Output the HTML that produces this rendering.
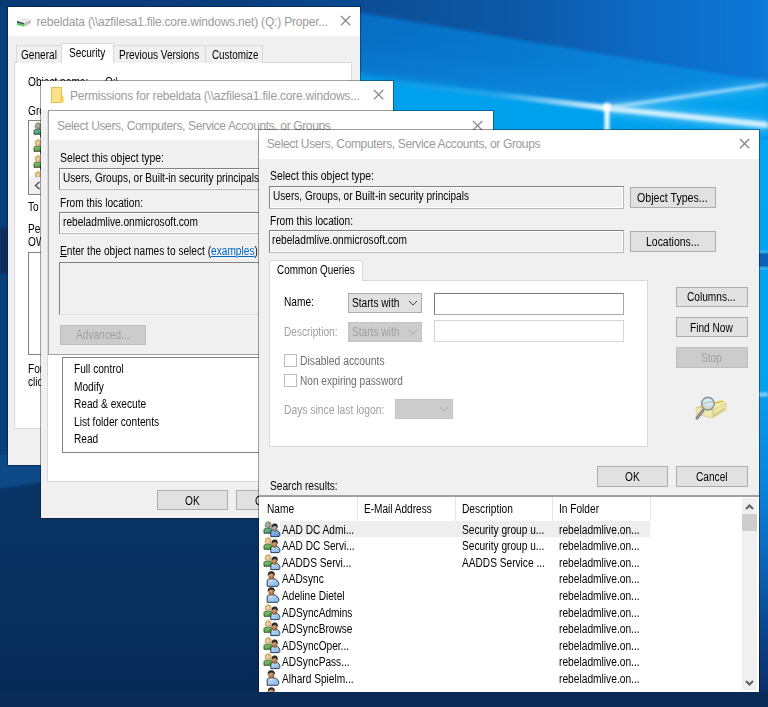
<!DOCTYPE html><html><head><meta charset="utf-8"><style>html,body{margin:0;padding:0;width:768px;height:707px;overflow:hidden;position:relative;font-family:"Liberation Sans",sans-serif}</style></head><body>
<svg width="768" height="707" style="position:absolute;left:0;top:0">
<defs>
<linearGradient id="gbase" x1="0" y1="0" x2="0" y2="1">
<stop offset="0" stop-color="#0a3f7c"/><stop offset="0.66" stop-color="#0b3e78"/><stop offset="1" stop-color="#082a58"/>
</linearGradient>
<linearGradient id="gright" x1="0" y1="0" x2="0" y2="707" gradientUnits="userSpaceOnUse">
<stop offset="0.18" stop-color="#05a6f2"/><stop offset="0.55" stop-color="#04a2ee"/><stop offset="0.57" stop-color="#0898ea"/><stop offset="0.68" stop-color="#0a86de"/><stop offset="0.80" stop-color="#0a64b8"/><stop offset="0.91" stop-color="#0b3f84"/><stop offset="1" stop-color="#0a2a5e"/>
</linearGradient>
<linearGradient id="gtop" x1="330" y1="0" x2="768" y2="0" gradientUnits="userSpaceOnUse">
<stop offset="0" stop-color="#0a4a90"/><stop offset="0.43" stop-color="#0a58a6"/><stop offset="0.71" stop-color="#0a6ac4"/><stop offset="1" stop-color="#0a78d8"/>
</linearGradient>
<linearGradient id="gtopstrip" x1="0" y1="0" x2="768" y2="0" gradientUnits="userSpaceOnUse">
<stop offset="0" stop-color="#0a3a76"/><stop offset="0.3" stop-color="#0a3d7c"/><stop offset="0.47" stop-color="#0a4a90"/><stop offset="1" stop-color="#0a4a90"/>
</linearGradient>
<linearGradient id="gmid" x1="330" y1="40" x2="768" y2="120" gradientUnits="userSpaceOnUse">
<stop offset="0" stop-color="#0a72c8"/><stop offset="1" stop-color="#0a94ea"/>
</linearGradient>
<linearGradient id="gvert" x1="0" y1="0" x2="0" y2="1">
<stop offset="0" stop-color="#ffffff"/><stop offset="1" stop-color="#d8f4ff"/>
</linearGradient>
<linearGradient id="gbl" x1="0" y1="465" x2="0" y2="707" gradientUnits="userSpaceOnUse">
<stop offset="0" stop-color="#083466"/><stop offset="0.3" stop-color="#083262"/><stop offset="1" stop-color="#072a56"/>
</linearGradient>
<linearGradient id="gbeamL" x1="360" y1="0" x2="607" y2="0" gradientUnits="userSpaceOnUse"><stop offset="0" stop-color="#d8f2ff" stop-opacity="0"/><stop offset="0.55" stop-color="#d8f2ff" stop-opacity="0.15"/><stop offset="1" stop-color="#f0faff" stop-opacity="0.95"/></linearGradient>
<linearGradient id="gmid2" x1="0" y1="0" x2="0" y2="1"><stop offset="0" stop-color="#0a62b4" stop-opacity="0.4"/><stop offset="1" stop-color="#0a62b4" stop-opacity="0"/></linearGradient>
<filter id="b1" x="-20%" y="-50%" width="140%" height="200%"><feGaussianBlur stdDeviation="1.5"/></filter>
<filter id="b2" x="-20%" y="-50%" width="140%" height="200%"><feGaussianBlur stdDeviation="5"/></filter>
<filter id="b3" x="-50%" y="-50%" width="200%" height="200%"><feGaussianBlur stdDeviation="0.8"/></filter>
</defs>
<rect width="768" height="707" fill="url(#gbase)"/>
<rect x="0" y="0" width="8" height="707" fill="#0a3f7c"/>
<rect x="0" y="228" width="8" height="46" fill="#072c58" filter="url(#b1)"/>
<polygon points="300,0 768,0 768,707 259,707 259,0" fill="url(#gright)"/>
<polygon points="330,0 768,0 768,140 330,140" fill="url(#gmid)"/>
<polygon points="300,-10 790,-10 790,86 768,82 330,8 300,3" fill="url(#gtop)" filter="url(#b1)"/>
<polygon points="330,8 768,81 768,110 330,45" fill="url(#gmid2)" filter="url(#b2)"/>
<polygon points="330,71 607,107 768,84 768,140 330,140" fill="#06a2ee" filter="url(#b2)"/>
<polygon points="360,76 607,105 607,111 360,81" fill="url(#gbeamL)" filter="url(#b1)"/>
<polygon points="607,104 768,120 768,130 607,112" fill="#bfeaff" opacity="0.5" filter="url(#b2)"/>
<polygon points="607,105.5 768,122 768,128 607,111" fill="#e8f8ff" opacity="0.85" filter="url(#b1)"/>
<polygon points="607,105 768,82 768,88 607,111" fill="#bfe9ff" opacity="0.35" filter="url(#b2)"/>
<polygon points="607,106 768,83 768,86 607,110" fill="#bfe9ff" opacity="0.75" filter="url(#b1)"/>
<rect x="604" y="106" width="6" height="30" fill="#c8f0ff" opacity="0.6" filter="url(#b1)"/>
<rect x="605.3" y="106" width="3.4" height="30" fill="url(#gvert)" filter="url(#b3)"/>
<circle cx="607" cy="107" r="4" fill="#fff" filter="url(#b1)"/>
<rect x="0" y="0" width="362" height="7" fill="url(#gtopstrip)"/>
<rect x="759" y="252" width="9" height="16" fill="#0b62b8"/>
<rect x="759" y="251" width="9" height="2" fill="#56c4f5" filter="url(#b3)"/>
<rect x="759" y="267" width="9" height="2" fill="#56c4f5" filter="url(#b3)"/>
<rect x="755" y="393" width="13" height="3" fill="#a8e4ff" filter="url(#b1)"/>
<polygon points="0,465 40,465 40,517 258,517 258,707 0,707" fill="url(#gbl)"/>
<polygon points="-10,455 60,455 60,480 -10,490" fill="#0b4886" filter="url(#b1)"/>
<rect x="0" y="692" width="768" height="15" fill="#0a2a58"/>
</svg><svg width="0" height="0" style="position:absolute"><defs>
<linearGradient id="shirtB" x1="0" y1="0" x2="1" y2="1"><stop offset="0" stop-color="#c4e0fa"/><stop offset="1" stop-color="#7fb2e6"/></linearGradient>
<linearGradient id="shirtG" x1="0" y1="0" x2="1" y2="1"><stop offset="0" stop-color="#8fd070"/><stop offset="1" stop-color="#3f8f30"/></linearGradient>
<radialGradient id="faceD" cx="0.4" cy="0.35" r="0.7"><stop offset="0" stop-color="#e2a878"/><stop offset="1" stop-color="#8a5428"/></radialGradient>
<radialGradient id="faceL" cx="0.4" cy="0.35" r="0.7"><stop offset="0" stop-color="#f8e0c0"/><stop offset="1" stop-color="#c09060"/></radialGradient>
<linearGradient id="shirtBs" x1="0" y1="0" x2="1" y2="1"><stop offset="0" stop-color="#9cc8f0"/><stop offset="1" stop-color="#4e8ed0"/></linearGradient>
<linearGradient id="shirtGs" x1="0" y1="0" x2="1" y2="1"><stop offset="0" stop-color="#7cc8a0"/><stop offset="1" stop-color="#2f7f60"/></linearGradient>
<radialGradient id="faceS" cx="0.4" cy="0.35" r="0.7"><stop offset="0" stop-color="#c8c0b0"/><stop offset="1" stop-color="#706858"/></radialGradient>
</defs></svg>
<div style="position:absolute;left:0;top:0;width:768px;height:707px;clip-path:inset(6px 407px 241px 7px)">
<div style="position:absolute;left:7px;top:6px;width:354px;height:460px;background:#f0f0f0;background-clip:padding-box;border:1px solid rgba(0,0,0,0.33);box-sizing:border-box"></div>
<div style="position:absolute;left:8px;top:7px;width:352px;height:29px;background:#fff"></div>
<svg style="position:absolute;left:16px;top:16px" width="16" height="13" viewBox="0 0 16 13">
<path d="M1 5 L9 1.5 L15 4 L15 7 L8 10.5 L1 9Z" fill="#d4d4d4"/>
<path d="M1 5 L9 1.5 L15 4 L8 7.2 Z" fill="#ececec"/>
<path d="M8 7.2 L15 4 L15 7 L8 10.5Z" fill="#c0c0c0"/>
<path d="M1 5 L8 7.2 L8 8.6 L1 6.8Z" fill="#3a3a3a"/>
<path d="M1 6.8 L8 8.6 L8 10.5 L1 9Z" fill="#4ccc5a"/>
<path d="M9 10.3 L11 10.3 L10 11.8Z" fill="#d8d8d8"/>
</svg>
<svg style="position:absolute;left:339.79999999999995px;top:14.9px" width="11.2" height="11.2"><path d="M1 1 L10.2 10.2 M10.2 1 L1 10.2" stroke="#8c8c8c" stroke-width="1.3"/></svg>
<div style="position:absolute;left:14px;top:62px;width:338px;height:367px;background:#fff;border:1px solid #d9d9d9;box-sizing:border-box"></div>
<div style="position:absolute;left:16px;top:45px;width:46px;height:18px;background:#f0f0f0;border:1px solid #d9d9d9;border-bottom:none;box-sizing:border-box"></div>
<div style="position:absolute;left:114px;top:45px;width:92px;height:18px;background:#f0f0f0;border:1px solid #d9d9d9;border-bottom:none;border-left:none;box-sizing:border-box"></div>
<div style="position:absolute;left:206px;top:45px;width:57px;height:18px;background:#f0f0f0;border:1px solid #d9d9d9;border-bottom:none;border-left:none;box-sizing:border-box"></div>
<div style="position:absolute;left:61px;top:43px;width:53px;height:20px;background:#fff;border:1px solid #d9d9d9;border-bottom:none;box-sizing:border-box"></div>
<div style="position:absolute;left:28px;top:120px;width:312px;height:75px;background:#fff;border:1px solid #828282;box-sizing:border-box"></div>
<svg style="position:absolute;left:33px;top:122px" width="18" height="17" viewBox="0 0 18 17">
<path d="M1 12.3 L1 8.6 C1.3 7.6 2.6 7.2 4.5 7.2 L6.5 7.2 C8.2 7.3 9.2 8 9.4 9.5 L9.4 12.3 Z" fill="url(#shirtGs)" stroke="#1e3a22" stroke-width="0.8" stroke-linejoin="round"/>
<path d="M1.8 6 C1.4 1.5 3.2 0.2 5.3 0.2 C7.5 0.2 9 1.5 8.8 6.5 L7.6 7 L7.6 3.2 C6.8 2.5 4 2.5 3.2 3.2 L3.2 7 Z" fill="#8aa880"/>
<ellipse cx="5.4" cy="4.6" rx="2.3" ry="3" fill="url(#faceS)"/>
<path d="M7.8 15.6 L7.8 10.8 C8.2 9.6 9.6 9.1 11.4 9.1 L13 9.1 C14.8 9.4 16.2 10.6 16.7 12.3 C17.1 13.6 16.9 15 16 15.6 Z" fill="url(#shirtBs)" stroke="#1e2a36" stroke-width="0.9" stroke-linejoin="round"/>
<ellipse cx="11.6" cy="7.4" rx="2.5" ry="3.3" fill="url(#faceS)"/>
<path d="M8.7 7.6 C8.3 3.6 9.8 2.4 11.7 2.4 C13.7 2.4 15.2 3.6 14.9 7.8 C14.5 6.2 13.6 5 11.8 4.9 C10.2 4.9 9.3 5.8 8.7 7.6Z" fill="#1e3040"/>
</svg>
<svg style="position:absolute;left:33px;top:139px" width="18" height="17" viewBox="0 0 18 17">
<path d="M1 12.3 L1 8.6 C1.3 7.6 2.6 7.2 4.5 7.2 L6.5 7.2 C8.2 7.3 9.2 8 9.4 9.5 L9.4 12.3 Z" fill="url(#shirtG)" stroke="#1e3a22" stroke-width="0.8" stroke-linejoin="round"/>
<path d="M1.8 6 C1.4 1.5 3.2 0.2 5.3 0.2 C7.5 0.2 9 1.5 8.8 6.5 L7.6 7 L7.6 3.2 C6.8 2.5 4 2.5 3.2 3.2 L3.2 7 Z" fill="#cdb66a"/>
<ellipse cx="5.4" cy="4.6" rx="2.3" ry="3" fill="url(#faceL)"/>
<path d="M7.8 15.6 L7.8 10.8 C8.2 9.6 9.6 9.1 11.4 9.1 L13 9.1 C14.8 9.4 16.2 10.6 16.7 12.3 C17.1 13.6 16.9 15 16 15.6 Z" fill="url(#shirtB)" stroke="#1e2a36" stroke-width="0.9" stroke-linejoin="round"/>
<ellipse cx="11.6" cy="7.4" rx="2.5" ry="3.3" fill="url(#faceD)"/>
<path d="M8.7 7.6 C8.3 3.6 9.8 2.4 11.7 2.4 C13.7 2.4 15.2 3.6 14.9 7.8 C14.5 6.2 13.6 5 11.8 4.9 C10.2 4.9 9.3 5.8 8.7 7.6Z" fill="#2a2a2a"/>
</svg>
<svg style="position:absolute;left:33px;top:155px" width="18" height="17" viewBox="0 0 18 17">
<path d="M1 12.3 L1 8.6 C1.3 7.6 2.6 7.2 4.5 7.2 L6.5 7.2 C8.2 7.3 9.2 8 9.4 9.5 L9.4 12.3 Z" fill="url(#shirtG)" stroke="#1e3a22" stroke-width="0.8" stroke-linejoin="round"/>
<path d="M1.8 6 C1.4 1.5 3.2 0.2 5.3 0.2 C7.5 0.2 9 1.5 8.8 6.5 L7.6 7 L7.6 3.2 C6.8 2.5 4 2.5 3.2 3.2 L3.2 7 Z" fill="#cdb66a"/>
<ellipse cx="5.4" cy="4.6" rx="2.3" ry="3" fill="url(#faceL)"/>
<path d="M7.8 15.6 L7.8 10.8 C8.2 9.6 9.6 9.1 11.4 9.1 L13 9.1 C14.8 9.4 16.2 10.6 16.7 12.3 C17.1 13.6 16.9 15 16 15.6 Z" fill="url(#shirtB)" stroke="#1e2a36" stroke-width="0.9" stroke-linejoin="round"/>
<ellipse cx="11.6" cy="7.4" rx="2.5" ry="3.3" fill="url(#faceD)"/>
<path d="M8.7 7.6 C8.3 3.6 9.8 2.4 11.7 2.4 C13.7 2.4 15.2 3.6 14.9 7.8 C14.5 6.2 13.6 5 11.8 4.9 C10.2 4.9 9.3 5.8 8.7 7.6Z" fill="#2a2a2a"/>
</svg>
<svg style="position:absolute;left:33px;top:171px" width="18" height="17" viewBox="0 0 18 17">
<path d="M1 12.3 L1 8.6 C1.3 7.6 2.6 7.2 4.5 7.2 L6.5 7.2 C8.2 7.3 9.2 8 9.4 9.5 L9.4 12.3 Z" fill="url(#shirtG)" stroke="#1e3a22" stroke-width="0.8" stroke-linejoin="round"/>
<path d="M1.8 6 C1.4 1.5 3.2 0.2 5.3 0.2 C7.5 0.2 9 1.5 8.8 6.5 L7.6 7 L7.6 3.2 C6.8 2.5 4 2.5 3.2 3.2 L3.2 7 Z" fill="#cdb66a"/>
<ellipse cx="5.4" cy="4.6" rx="2.3" ry="3" fill="url(#faceL)"/>
<path d="M7.8 15.6 L7.8 10.8 C8.2 9.6 9.6 9.1 11.4 9.1 L13 9.1 C14.8 9.4 16.2 10.6 16.7 12.3 C17.1 13.6 16.9 15 16 15.6 Z" fill="url(#shirtB)" stroke="#1e2a36" stroke-width="0.9" stroke-linejoin="round"/>
<ellipse cx="11.6" cy="7.4" rx="2.5" ry="3.3" fill="url(#faceD)"/>
<path d="M8.7 7.6 C8.3 3.6 9.8 2.4 11.7 2.4 C13.7 2.4 15.2 3.6 14.9 7.8 C14.5 6.2 13.6 5 11.8 4.9 C10.2 4.9 9.3 5.8 8.7 7.6Z" fill="#2a2a2a"/>
</svg>
<div style="position:absolute;left:29px;top:177px;width:310px;height:17px;background:#f0f0f0"></div>
<svg style="position:absolute;left:34px;top:181px" width="7" height="9"><path d="M5.5 0.8 L1.5 4.5 L5.5 8.2" stroke="#606060" stroke-width="1.6" fill="none"/></svg>
<div style="position:absolute;left:28px;top:252px;width:312px;height:103px;background:#fff;border:1px solid #828282;box-sizing:border-box"></div>
<div style="position:absolute;top:14.60px;font-size:12px;line-height:15px;white-space:nowrap;letter-spacing:-0.192px;color:#9b9b9b;left:36.50px">rebeldata (\\azfilesa1.file.core.windows.net) (Q:) Proper...</div>
<div style="position:absolute;top:48.20px;font-size:12px;line-height:15px;white-space:nowrap;color:#000;transform:scaleX(0.8430);transform-origin:0 0;left:20.90px">General</div>
<div style="position:absolute;top:46.30px;font-size:12px;line-height:15px;white-space:nowrap;color:#000;transform:scaleX(0.8349);transform-origin:0 0;left:69.40px">Security</div>
<div style="position:absolute;top:48.20px;font-size:12px;line-height:15px;white-space:nowrap;color:#000;transform:scaleX(0.8350);transform-origin:0 0;left:118.60px">Previous Versions</div>
<div style="position:absolute;top:48.20px;font-size:12px;line-height:15px;white-space:nowrap;color:#000;transform:scaleX(0.8203);transform-origin:0 0;left:211.50px">Customize</div>
<div style="position:absolute;top:74.60px;font-size:12px;line-height:15px;white-space:nowrap;color:#000;transform:scaleX(0.8450);transform-origin:0 0;left:28.00px">Object name:</div>
<div style="position:absolute;top:74.60px;font-size:12px;line-height:15px;white-space:nowrap;color:#000;transform:scaleX(0.8450);transform-origin:0 0;left:105.00px">Q:\</div>
<div style="position:absolute;top:104.00px;font-size:12px;line-height:15px;white-space:nowrap;color:#000;transform:scaleX(0.8450);transform-origin:0 0;left:28.00px">Group or user names:</div>
<div style="position:absolute;top:200.40px;font-size:12px;line-height:15px;white-space:nowrap;color:#000;transform:scaleX(0.8450);transform-origin:0 0;left:28.00px">To change permissions, click Edit.</div>
<div style="position:absolute;top:222.40px;font-size:12px;line-height:15px;white-space:nowrap;color:#000;transform:scaleX(0.8450);transform-origin:0 0;left:28.00px">Permissions for OWNER</div>
<div style="position:absolute;top:235.00px;font-size:12px;line-height:15px;white-space:nowrap;color:#000;transform:scaleX(0.8450);transform-origin:0 0;left:28.00px">OWNER RIGHTS</div>
<div style="position:absolute;top:362.30px;font-size:12px;line-height:15px;white-space:nowrap;color:#000;transform:scaleX(0.8450);transform-origin:0 0;left:28.00px">For special permissions or advanced settings,</div>
<div style="position:absolute;top:375.00px;font-size:12px;line-height:15px;white-space:nowrap;color:#000;transform:scaleX(0.8450);transform-origin:0 0;left:28.00px">click Advanced.</div>
</div>
<div style="position:absolute;left:0;top:0;width:768px;height:707px;clip-path:inset(80px 374px 188px 40px)">
<div style="position:absolute;left:40px;top:80px;width:354px;height:439px;background:#f0f0f0;background-clip:padding-box;border:1px solid rgba(0,0,0,0.36);box-sizing:border-box"></div>
<div style="position:absolute;left:41px;top:81px;width:352px;height:29px;background:#fff"></div>
<svg style="position:absolute;left:51px;top:87px" width="13" height="16" viewBox="0 0 13 16">
<rect x="0.5" y="0.5" width="10" height="15" fill="#ffe08a" stroke="#e6bf50" stroke-width="1"/>
<rect x="9.2" y="8.5" width="3.3" height="7" fill="#f2cf5a"/>
</svg>
<svg style="position:absolute;left:372.79999999999995px;top:89.4px" width="11.2" height="11.2"><path d="M1 1 L10.2 10.2 M10.2 1 L1 10.2" stroke="#8c8c8c" stroke-width="1.3"/></svg>
<div style="position:absolute;left:47px;top:112px;width:333px;height:370px;background:#fff;border:1px solid #d9d9d9;box-sizing:border-box"></div>
<div style="position:absolute;left:62px;top:357px;width:308px;height:96px;background:#fff;border:1px solid #828282;box-sizing:border-box"></div>
<div style="position:absolute;left:157px;top:490px;width:71px;height:20px;background:#e1e1e1;border:1px solid #adadad;box-sizing:border-box"></div>
<div style="position:absolute;left:236px;top:490px;width:71px;height:20px;background:#e1e1e1;border:1px solid #adadad;box-sizing:border-box"></div>
<div style="position:absolute;top:89.40px;font-size:12px;line-height:15px;white-space:nowrap;letter-spacing:-0.214px;color:#9b9b9b;left:70.00px">Permissions for rebeldata (\\azfilesa1.file.core.windows...</div>
<div style="position:absolute;top:362.30px;font-size:12px;line-height:15px;white-space:nowrap;color:#000;transform:scaleX(0.8450);transform-origin:0 0;left:73.50px">Full control</div>
<div style="position:absolute;top:379.80px;font-size:12px;line-height:15px;white-space:nowrap;color:#000;transform:scaleX(0.8450);transform-origin:0 0;left:73.50px">Modify</div>
<div style="position:absolute;top:397.30px;font-size:12px;line-height:15px;white-space:nowrap;color:#000;transform:scaleX(0.8450);transform-origin:0 0;left:73.50px">Read &amp; execute</div>
<div style="position:absolute;top:414.80px;font-size:12px;line-height:15px;white-space:nowrap;color:#000;transform:scaleX(0.8450);transform-origin:0 0;left:73.50px">List folder contents</div>
<div style="position:absolute;top:432.30px;font-size:12px;line-height:15px;white-space:nowrap;color:#000;transform:scaleX(0.8450);transform-origin:0 0;left:73.50px">Read</div>
<div style="position:absolute;top:493.50px;font-size:12px;line-height:15px;white-space:nowrap;color:#000;transform:scaleX(0.8450);transform-origin:0 0;left:184.57px">OK</div>
<div style="position:absolute;top:493.50px;font-size:12px;line-height:15px;white-space:nowrap;color:#000;transform:scaleX(0.8450);transform-origin:0 0;left:255.12px">Cancel</div>
</div>
<div style="position:absolute;left:0;top:0;width:768px;height:707px;clip-path:inset(110px 274px 352px 48px)">
<div style="position:absolute;left:48px;top:110px;width:446px;height:245px;background:#f0f0f0;background-clip:padding-box;border:1px solid rgba(0,0,0,0.36);box-sizing:border-box"></div>
<div style="position:absolute;left:49px;top:111px;width:444px;height:29px;background:#fff"></div>
<svg style="position:absolute;left:472.4px;top:119.7px" width="11.2" height="11.2"><path d="M1 1 L10.2 10.2 M10.2 1 L1 10.2" stroke="#8c8c8c" stroke-width="1.3"/></svg>
<div style="position:absolute;left:59px;top:168px;width:355px;height:22px;background:#f0f0f0;border:1px solid;border-color:#828282 #b9b9b9 #b9b9b9 #828282;box-sizing:border-box;box-shadow:inset 1px 1px 0 #fff,inset -1px -1px 0 #fff"></div>
<div style="position:absolute;left:59px;top:212px;width:355px;height:22px;background:#f0f0f0;border:1px solid;border-color:#828282 #b9b9b9 #b9b9b9 #828282;box-sizing:border-box;box-shadow:inset 1px 1px 0 #fff,inset -1px -1px 0 #fff"></div>
<div style="position:absolute;left:60px;top:244.2px;font-family:'Liberation Sans', sans-serif;font-size:12px;line-height:15px;white-space:nowrap;transform:scaleX(0.845);transform-origin:0 0;color:#000"><span style="text-decoration:underline">E</span>nter the object names to select (<span style="color:#0066cc;text-decoration:underline">examples</span>)</div>
<div style="position:absolute;left:59px;top:262px;width:425px;height:53px;background:#f0f0f0;border:1px solid;border-color:#828282 #e3e3e3 #e3e3e3 #828282;box-sizing:border-box"></div>
<div style="position:absolute;left:60px;top:325px;width:86px;height:20px;background:#cccccc;border:1px solid #bfbfbf;box-sizing:border-box"></div>
<div style="position:absolute;top:118.60px;font-size:12px;line-height:15px;white-space:nowrap;letter-spacing:-0.359px;color:#9b9b9b;left:57.00px">Select Users, Computers, Service Accounts, or Groups</div>
<div style="position:absolute;top:150.80px;font-size:12px;line-height:15px;white-space:nowrap;color:#000;transform:scaleX(0.8661);transform-origin:0 0;left:59.70px">Select this object type:</div>
<div style="position:absolute;top:170.50px;font-size:12px;line-height:15px;white-space:nowrap;color:#000;transform:scaleX(0.8397);transform-origin:0 0;left:63.00px">Users, Groups, or Built-in security principals</div>
<div style="position:absolute;top:196.30px;font-size:12px;line-height:15px;white-space:nowrap;color:#000;transform:scaleX(0.8465);transform-origin:0 0;left:60.00px">From this location:</div>
<div style="position:absolute;top:214.90px;font-size:12px;line-height:15px;white-space:nowrap;color:#000;transform:scaleX(0.8469);transform-origin:0 0;left:62.50px">rebeladmlive.onmicrosoft.com</div>
<div style="position:absolute;top:328.30px;font-size:12px;line-height:15px;white-space:nowrap;color:#a0a0a0;transform:scaleX(0.8450);transform-origin:0 0;left:75.62px">Advanced...</div>
</div>
<div style="position:absolute;left:0;top:0;width:768px;height:707px;clip-path:inset(129px 8px 15px 258px)">
<div style="position:absolute;left:258px;top:129px;width:502px;height:563px;background:#f0f0f0;background-clip:padding-box;border:1px solid rgba(0,0,0,0.38);box-sizing:border-box"></div>
<div style="position:absolute;left:259px;top:130px;width:500px;height:29px;background:#fff"></div>
<svg style="position:absolute;left:738.9px;top:137.70000000000002px" width="11.2" height="11.2"><path d="M1 1 L10.2 10.2 M10.2 1 L1 10.2" stroke="#858585" stroke-width="1.3"/></svg>
<div style="position:absolute;left:269px;top:186px;width:355px;height:23px;background:#f0f0f0;border:1px solid;border-color:#828282 #b9b9b9 #b9b9b9 #828282;box-sizing:border-box;box-shadow:inset 1px 1px 0 #fff,inset -1px -1px 0 #fff"></div>
<div style="position:absolute;left:630px;top:187px;width:86px;height:21px;background:#e1e1e1;border:1px solid #adadad;box-sizing:border-box"></div>
<div style="position:absolute;left:269px;top:230px;width:355px;height:23px;background:#f0f0f0;border:1px solid;border-color:#828282 #b9b9b9 #b9b9b9 #828282;box-sizing:border-box;box-shadow:inset 1px 1px 0 #fff,inset -1px -1px 0 #fff"></div>
<div style="position:absolute;left:630px;top:231px;width:86px;height:21px;background:#e1e1e1;border:1px solid #adadad;box-sizing:border-box"></div>
<div style="position:absolute;left:269px;top:280px;width:379px;height:167px;background:#fff;border:1px solid #d9d9d9;box-sizing:border-box"></div>
<div style="position:absolute;left:269px;top:260px;width:94px;height:21px;background:#fff;border:1px solid #d9d9d9;border-bottom:none;box-sizing:border-box"></div>
<div style="position:absolute;left:348px;top:293px;width:74px;height:20px;background:#e1e1e1;border:1px solid #adadad;box-sizing:border-box"></div>
<svg style="position:absolute;left:407.5px;top:300.0px" width="10" height="6"><path d="M1 1 L5 5 L9 1" stroke="#404040" stroke-width="1" fill="none"/></svg>
<div style="position:absolute;left:434px;top:293px;width:190px;height:22px;background:#fff;border:1px solid;border-color:#7a7a7a #a8a8a8 #a8a8a8 #7a7a7a;box-sizing:border-box;box-shadow:inset 1px 1px 0 #fff,inset -1px -1px 0 #fff"></div>
<div style="position:absolute;left:348px;top:322px;width:74px;height:20px;background:#cccccc;border:1px solid #c4c4c4;box-sizing:border-box"></div>
<svg style="position:absolute;left:407.5px;top:329.0px" width="10" height="6"><path d="M1 1 L5 5 L9 1" stroke="#a6a6a6" stroke-width="1" fill="none"/></svg>
<div style="position:absolute;left:434px;top:320px;width:190px;height:22px;background:#fff;border:1px solid;border-color:#d5d5d5 #d5d5d5 #d5d5d5 #d5d5d5;box-sizing:border-box"></div>
<div style="position:absolute;left:284px;top:354px;width:13px;height:13px;background:#fff;border:1px solid #bcbcbc;box-sizing:border-box"></div>
<div style="position:absolute;left:284px;top:374px;width:13px;height:13px;background:#fff;border:1px solid #bcbcbc;box-sizing:border-box"></div>
<div style="position:absolute;left:395px;top:399px;width:58px;height:20px;background:#cccccc;border:1px solid #c4c4c4;box-sizing:border-box"></div>
<svg style="position:absolute;left:438.5px;top:406.0px" width="10" height="6"><path d="M1 1 L5 5 L9 1" stroke="#a6a6a6" stroke-width="1" fill="none"/></svg>
<div style="position:absolute;left:676px;top:287px;width:72px;height:20px;background:#e1e1e1;border:1px solid #adadad;box-sizing:border-box"></div>
<div style="position:absolute;left:676px;top:317px;width:72px;height:20px;background:#e1e1e1;border:1px solid #adadad;box-sizing:border-box"></div>
<div style="position:absolute;left:676px;top:347px;width:72px;height:21px;background:#cccccc;border:1px solid #bfbfbf;box-sizing:border-box"></div>
<svg style="position:absolute;left:692px;top:392px" width="40" height="30" viewBox="0 0 40 30">
<defs>
<linearGradient id="lens" x1="0" y1="0" x2="0" y2="1"><stop offset="0" stop-color="#dff0ff"/><stop offset="0.55" stop-color="#cfe6f0"/><stop offset="1" stop-color="#d8d8a0"/></linearGradient>
</defs>
<path d="M4.2 15 L31 8 L34 10.5 L34 17.7 L20.8 26 L4.2 22 Z" fill="#efe6a0"/>
<path d="M4.2 15 L31 8 L34 10.5 L20.8 18 Z" fill="#f4eeb4"/>
<path d="M6 15.2 L30 8.6 L31.5 9.6 L8 16 Z" fill="#d9b62c"/>
<path d="M20.8 18 L34 10.5 L34 17.7 L20.8 26 Z" fill="#ede3a0" stroke="#c8b870" stroke-width="0.5"/>
<path d="M4.2 15 L20.8 18 L20.8 26 L4.2 22 Z" fill="#f0e8ac" stroke="#c8b870" stroke-width="0.5"/>
<path d="M22 23.5 L33 16.5" stroke="#6a6a50" stroke-width="1" stroke-dasharray="1 1.6"/>
<line x1="11" y1="18.3" x2="5" y2="26" stroke="#7c7c7c" stroke-width="3" stroke-linecap="round"/>
<line x1="11" y1="18.3" x2="5" y2="26" stroke="#b0b0b0" stroke-width="1" stroke-linecap="round"/>
<circle cx="15.9" cy="11.7" r="6.3" fill="url(#lens)" stroke="#8c96a0" stroke-width="1.6"/>
<path d="M10.5 12.5 C13 10.5 17 9.5 21 9.8" stroke="#9ab890" stroke-width="0.8" fill="none"/>
</svg>
<div style="position:absolute;left:597px;top:466px;width:71px;height:21px;background:#e1e1e1;border:1px solid #adadad;box-sizing:border-box"></div>
<div style="position:absolute;left:676px;top:466px;width:72px;height:21px;background:#e1e1e1;border:1px solid #adadad;box-sizing:border-box"></div>
<div style="position:absolute;left:259px;top:495px;width:500px;height:197px;background:#fff;border-top:2px solid #a0a0a0;box-sizing:border-box"></div>
<div style="position:absolute;left:357.0px;top:497px;width:1.0px;height:23.5px;background:#e5e5e5"></div>
<div style="position:absolute;left:455.1px;top:497px;width:1.0px;height:23.5px;background:#e5e5e5"></div>
<div style="position:absolute;left:552.0px;top:497px;width:1.0px;height:23.5px;background:#e5e5e5"></div>
<div style="position:absolute;left:649.9px;top:497px;width:1.0px;height:23.5px;background:#e5e5e5"></div>
<div style="position:absolute;left:280px;top:520.8px;width:370.4px;height:16.0px;background:#eeeeee"></div>
<svg style="position:absolute;left:263px;top:520.8px" width="18" height="17" viewBox="0 0 18 17">
<path d="M1 12.3 L1 8.6 C1.3 7.6 2.6 7.2 4.5 7.2 L6.5 7.2 C8.2 7.3 9.2 8 9.4 9.5 L9.4 12.3 Z" fill="url(#shirtGs)" stroke="#1e3a22" stroke-width="0.8" stroke-linejoin="round"/>
<path d="M1.8 6 C1.4 1.5 3.2 0.2 5.3 0.2 C7.5 0.2 9 1.5 8.8 6.5 L7.6 7 L7.6 3.2 C6.8 2.5 4 2.5 3.2 3.2 L3.2 7 Z" fill="#8aa880"/>
<ellipse cx="5.4" cy="4.6" rx="2.3" ry="3" fill="url(#faceS)"/>
<path d="M7.8 15.6 L7.8 10.8 C8.2 9.6 9.6 9.1 11.4 9.1 L13 9.1 C14.8 9.4 16.2 10.6 16.7 12.3 C17.1 13.6 16.9 15 16 15.6 Z" fill="url(#shirtBs)" stroke="#1e2a36" stroke-width="0.9" stroke-linejoin="round"/>
<ellipse cx="11.6" cy="7.4" rx="2.5" ry="3.3" fill="url(#faceS)"/>
<path d="M8.7 7.6 C8.3 3.6 9.8 2.4 11.7 2.4 C13.7 2.4 15.2 3.6 14.9 7.8 C14.5 6.2 13.6 5 11.8 4.9 C10.2 4.9 9.3 5.8 8.7 7.6Z" fill="#1e3040"/>
</svg>
<svg style="position:absolute;left:263px;top:537.37px" width="18" height="17" viewBox="0 0 18 17">
<path d="M1 12.3 L1 8.6 C1.3 7.6 2.6 7.2 4.5 7.2 L6.5 7.2 C8.2 7.3 9.2 8 9.4 9.5 L9.4 12.3 Z" fill="url(#shirtG)" stroke="#1e3a22" stroke-width="0.8" stroke-linejoin="round"/>
<path d="M1.8 6 C1.4 1.5 3.2 0.2 5.3 0.2 C7.5 0.2 9 1.5 8.8 6.5 L7.6 7 L7.6 3.2 C6.8 2.5 4 2.5 3.2 3.2 L3.2 7 Z" fill="#cdb66a"/>
<ellipse cx="5.4" cy="4.6" rx="2.3" ry="3" fill="url(#faceL)"/>
<path d="M7.8 15.6 L7.8 10.8 C8.2 9.6 9.6 9.1 11.4 9.1 L13 9.1 C14.8 9.4 16.2 10.6 16.7 12.3 C17.1 13.6 16.9 15 16 15.6 Z" fill="url(#shirtB)" stroke="#1e2a36" stroke-width="0.9" stroke-linejoin="round"/>
<ellipse cx="11.6" cy="7.4" rx="2.5" ry="3.3" fill="url(#faceD)"/>
<path d="M8.7 7.6 C8.3 3.6 9.8 2.4 11.7 2.4 C13.7 2.4 15.2 3.6 14.9 7.8 C14.5 6.2 13.6 5 11.8 4.9 C10.2 4.9 9.3 5.8 8.7 7.6Z" fill="#2a2a2a"/>
</svg>
<svg style="position:absolute;left:263px;top:553.9399999999999px" width="18" height="17" viewBox="0 0 18 17">
<path d="M1 12.3 L1 8.6 C1.3 7.6 2.6 7.2 4.5 7.2 L6.5 7.2 C8.2 7.3 9.2 8 9.4 9.5 L9.4 12.3 Z" fill="url(#shirtG)" stroke="#1e3a22" stroke-width="0.8" stroke-linejoin="round"/>
<path d="M1.8 6 C1.4 1.5 3.2 0.2 5.3 0.2 C7.5 0.2 9 1.5 8.8 6.5 L7.6 7 L7.6 3.2 C6.8 2.5 4 2.5 3.2 3.2 L3.2 7 Z" fill="#cdb66a"/>
<ellipse cx="5.4" cy="4.6" rx="2.3" ry="3" fill="url(#faceL)"/>
<path d="M7.8 15.6 L7.8 10.8 C8.2 9.6 9.6 9.1 11.4 9.1 L13 9.1 C14.8 9.4 16.2 10.6 16.7 12.3 C17.1 13.6 16.9 15 16 15.6 Z" fill="url(#shirtB)" stroke="#1e2a36" stroke-width="0.9" stroke-linejoin="round"/>
<ellipse cx="11.6" cy="7.4" rx="2.5" ry="3.3" fill="url(#faceD)"/>
<path d="M8.7 7.6 C8.3 3.6 9.8 2.4 11.7 2.4 C13.7 2.4 15.2 3.6 14.9 7.8 C14.5 6.2 13.6 5 11.8 4.9 C10.2 4.9 9.3 5.8 8.7 7.6Z" fill="#2a2a2a"/>
</svg>
<svg style="position:absolute;left:266px;top:570.51px" width="16" height="17" viewBox="0 0 16 17">
<path d="M1.2 15.3 L1.2 9.5 C1.5 8.2 3 7.8 5 7.8 L8 7.8 C10 8 11.5 9.5 12.4 11.2 C13.2 12.6 13 14.5 11.5 15.3 Z" fill="url(#shirtB)" stroke="#1e2a36" stroke-width="0.9" stroke-linejoin="round"/>
<path d="M4.6 8.2 L5.6 11 L6.6 8.2Z" fill="#e8f4ff"/>
<ellipse cx="5.3" cy="5" rx="2.9" ry="3.6" fill="url(#faceD)"/>
<path d="M1.8 5.2 C1.4 1.6 3.2 0.3 5.4 0.3 C7.6 0.3 9.3 1.6 9 5.4 C8.6 3.8 7.6 2.6 5.6 2.5 C3.8 2.5 2.6 3.3 1.8 5.2Z" fill="#2a2a2a"/>
</svg>
<svg style="position:absolute;left:266px;top:587.0799999999999px" width="16" height="17" viewBox="0 0 16 17">
<path d="M1.2 15.3 L1.2 9.5 C1.5 8.2 3 7.8 5 7.8 L8 7.8 C10 8 11.5 9.5 12.4 11.2 C13.2 12.6 13 14.5 11.5 15.3 Z" fill="url(#shirtB)" stroke="#1e2a36" stroke-width="0.9" stroke-linejoin="round"/>
<path d="M4.6 8.2 L5.6 11 L6.6 8.2Z" fill="#e8f4ff"/>
<ellipse cx="5.3" cy="5" rx="2.9" ry="3.6" fill="url(#faceD)"/>
<path d="M1.8 5.2 C1.4 1.6 3.2 0.3 5.4 0.3 C7.6 0.3 9.3 1.6 9 5.4 C8.6 3.8 7.6 2.6 5.6 2.5 C3.8 2.5 2.6 3.3 1.8 5.2Z" fill="#2a2a2a"/>
</svg>
<svg style="position:absolute;left:263px;top:603.65px" width="18" height="17" viewBox="0 0 18 17">
<path d="M1 12.3 L1 8.6 C1.3 7.6 2.6 7.2 4.5 7.2 L6.5 7.2 C8.2 7.3 9.2 8 9.4 9.5 L9.4 12.3 Z" fill="url(#shirtG)" stroke="#1e3a22" stroke-width="0.8" stroke-linejoin="round"/>
<path d="M1.8 6 C1.4 1.5 3.2 0.2 5.3 0.2 C7.5 0.2 9 1.5 8.8 6.5 L7.6 7 L7.6 3.2 C6.8 2.5 4 2.5 3.2 3.2 L3.2 7 Z" fill="#cdb66a"/>
<ellipse cx="5.4" cy="4.6" rx="2.3" ry="3" fill="url(#faceL)"/>
<path d="M7.8 15.6 L7.8 10.8 C8.2 9.6 9.6 9.1 11.4 9.1 L13 9.1 C14.8 9.4 16.2 10.6 16.7 12.3 C17.1 13.6 16.9 15 16 15.6 Z" fill="url(#shirtB)" stroke="#1e2a36" stroke-width="0.9" stroke-linejoin="round"/>
<ellipse cx="11.6" cy="7.4" rx="2.5" ry="3.3" fill="url(#faceD)"/>
<path d="M8.7 7.6 C8.3 3.6 9.8 2.4 11.7 2.4 C13.7 2.4 15.2 3.6 14.9 7.8 C14.5 6.2 13.6 5 11.8 4.9 C10.2 4.9 9.3 5.8 8.7 7.6Z" fill="#2a2a2a"/>
</svg>
<svg style="position:absolute;left:263px;top:620.2199999999999px" width="18" height="17" viewBox="0 0 18 17">
<path d="M1 12.3 L1 8.6 C1.3 7.6 2.6 7.2 4.5 7.2 L6.5 7.2 C8.2 7.3 9.2 8 9.4 9.5 L9.4 12.3 Z" fill="url(#shirtG)" stroke="#1e3a22" stroke-width="0.8" stroke-linejoin="round"/>
<path d="M1.8 6 C1.4 1.5 3.2 0.2 5.3 0.2 C7.5 0.2 9 1.5 8.8 6.5 L7.6 7 L7.6 3.2 C6.8 2.5 4 2.5 3.2 3.2 L3.2 7 Z" fill="#cdb66a"/>
<ellipse cx="5.4" cy="4.6" rx="2.3" ry="3" fill="url(#faceL)"/>
<path d="M7.8 15.6 L7.8 10.8 C8.2 9.6 9.6 9.1 11.4 9.1 L13 9.1 C14.8 9.4 16.2 10.6 16.7 12.3 C17.1 13.6 16.9 15 16 15.6 Z" fill="url(#shirtB)" stroke="#1e2a36" stroke-width="0.9" stroke-linejoin="round"/>
<ellipse cx="11.6" cy="7.4" rx="2.5" ry="3.3" fill="url(#faceD)"/>
<path d="M8.7 7.6 C8.3 3.6 9.8 2.4 11.7 2.4 C13.7 2.4 15.2 3.6 14.9 7.8 C14.5 6.2 13.6 5 11.8 4.9 C10.2 4.9 9.3 5.8 8.7 7.6Z" fill="#2a2a2a"/>
</svg>
<svg style="position:absolute;left:263px;top:636.79px" width="18" height="17" viewBox="0 0 18 17">
<path d="M1 12.3 L1 8.6 C1.3 7.6 2.6 7.2 4.5 7.2 L6.5 7.2 C8.2 7.3 9.2 8 9.4 9.5 L9.4 12.3 Z" fill="url(#shirtG)" stroke="#1e3a22" stroke-width="0.8" stroke-linejoin="round"/>
<path d="M1.8 6 C1.4 1.5 3.2 0.2 5.3 0.2 C7.5 0.2 9 1.5 8.8 6.5 L7.6 7 L7.6 3.2 C6.8 2.5 4 2.5 3.2 3.2 L3.2 7 Z" fill="#cdb66a"/>
<ellipse cx="5.4" cy="4.6" rx="2.3" ry="3" fill="url(#faceL)"/>
<path d="M7.8 15.6 L7.8 10.8 C8.2 9.6 9.6 9.1 11.4 9.1 L13 9.1 C14.8 9.4 16.2 10.6 16.7 12.3 C17.1 13.6 16.9 15 16 15.6 Z" fill="url(#shirtB)" stroke="#1e2a36" stroke-width="0.9" stroke-linejoin="round"/>
<ellipse cx="11.6" cy="7.4" rx="2.5" ry="3.3" fill="url(#faceD)"/>
<path d="M8.7 7.6 C8.3 3.6 9.8 2.4 11.7 2.4 C13.7 2.4 15.2 3.6 14.9 7.8 C14.5 6.2 13.6 5 11.8 4.9 C10.2 4.9 9.3 5.8 8.7 7.6Z" fill="#2a2a2a"/>
</svg>
<svg style="position:absolute;left:263px;top:653.3599999999999px" width="18" height="17" viewBox="0 0 18 17">
<path d="M1 12.3 L1 8.6 C1.3 7.6 2.6 7.2 4.5 7.2 L6.5 7.2 C8.2 7.3 9.2 8 9.4 9.5 L9.4 12.3 Z" fill="url(#shirtG)" stroke="#1e3a22" stroke-width="0.8" stroke-linejoin="round"/>
<path d="M1.8 6 C1.4 1.5 3.2 0.2 5.3 0.2 C7.5 0.2 9 1.5 8.8 6.5 L7.6 7 L7.6 3.2 C6.8 2.5 4 2.5 3.2 3.2 L3.2 7 Z" fill="#cdb66a"/>
<ellipse cx="5.4" cy="4.6" rx="2.3" ry="3" fill="url(#faceL)"/>
<path d="M7.8 15.6 L7.8 10.8 C8.2 9.6 9.6 9.1 11.4 9.1 L13 9.1 C14.8 9.4 16.2 10.6 16.7 12.3 C17.1 13.6 16.9 15 16 15.6 Z" fill="url(#shirtB)" stroke="#1e2a36" stroke-width="0.9" stroke-linejoin="round"/>
<ellipse cx="11.6" cy="7.4" rx="2.5" ry="3.3" fill="url(#faceD)"/>
<path d="M8.7 7.6 C8.3 3.6 9.8 2.4 11.7 2.4 C13.7 2.4 15.2 3.6 14.9 7.8 C14.5 6.2 13.6 5 11.8 4.9 C10.2 4.9 9.3 5.8 8.7 7.6Z" fill="#2a2a2a"/>
</svg>
<svg style="position:absolute;left:266px;top:669.93px" width="16" height="17" viewBox="0 0 16 17">
<path d="M1.2 15.3 L1.2 9.5 C1.5 8.2 3 7.8 5 7.8 L8 7.8 C10 8 11.5 9.5 12.4 11.2 C13.2 12.6 13 14.5 11.5 15.3 Z" fill="url(#shirtB)" stroke="#1e2a36" stroke-width="0.9" stroke-linejoin="round"/>
<path d="M4.6 8.2 L5.6 11 L6.6 8.2Z" fill="#e8f4ff"/>
<ellipse cx="5.3" cy="5" rx="2.9" ry="3.6" fill="url(#faceD)"/>
<path d="M1.8 5.2 C1.4 1.6 3.2 0.3 5.4 0.3 C7.6 0.3 9.3 1.6 9 5.4 C8.6 3.8 7.6 2.6 5.6 2.5 C3.8 2.5 2.6 3.3 1.8 5.2Z" fill="#2a2a2a"/>
</svg>
<svg style="position:absolute;left:266px;top:686.5px" width="16" height="17" viewBox="0 0 16 17">
<path d="M1.2 15.3 L1.2 9.5 C1.5 8.2 3 7.8 5 7.8 L8 7.8 C10 8 11.5 9.5 12.4 11.2 C13.2 12.6 13 14.5 11.5 15.3 Z" fill="url(#shirtB)" stroke="#1e2a36" stroke-width="0.9" stroke-linejoin="round"/>
<path d="M4.6 8.2 L5.6 11 L6.6 8.2Z" fill="#e8f4ff"/>
<ellipse cx="5.3" cy="5" rx="2.9" ry="3.6" fill="url(#faceD)"/>
<path d="M1.8 5.2 C1.4 1.6 3.2 0.3 5.4 0.3 C7.6 0.3 9.3 1.6 9 5.4 C8.6 3.8 7.6 2.6 5.6 2.5 C3.8 2.5 2.6 3.3 1.8 5.2Z" fill="#2a2a2a"/>
</svg>
<div style="position:absolute;left:742px;top:497.5px;width:14.5px;height:192.5px;background:#f0f0f0"></div>
<div style="position:absolute;left:742px;top:514px;width:14.5px;height:16.5px;background:#cdcdcd"></div>
<svg style="position:absolute;left:745px;top:504px" width="9" height="6"><path d="M1 5 L4.5 1.5 L8 5" stroke="#606060" stroke-width="2" fill="none"/></svg>
<svg style="position:absolute;left:745px;top:680px" width="9" height="6"><path d="M1 1 L4.5 4.5 L8 1" stroke="#606060" stroke-width="2" fill="none"/></svg>
<div style="position:absolute;top:137.00px;font-size:12px;line-height:15px;white-space:nowrap;letter-spacing:-0.359px;color:#9b9b9b;left:266.70px">Select Users, Computers, Service Accounts, or Groups</div>
<div style="position:absolute;top:169.20px;font-size:12px;line-height:15px;white-space:nowrap;color:#000;transform:scaleX(0.8661);transform-origin:0 0;left:269.60px">Select this object type:</div>
<div style="position:absolute;top:188.80px;font-size:12px;line-height:15px;white-space:nowrap;color:#000;transform:scaleX(0.8397);transform-origin:0 0;left:272.70px">Users, Groups, or Built-in security principals</div>
<div style="position:absolute;top:191.00px;font-size:12px;line-height:15px;white-space:nowrap;color:#000;transform:scaleX(0.8857);transform-origin:0 0;left:637.05px">Object Types...</div>
<div style="position:absolute;top:214.00px;font-size:12px;line-height:15px;white-space:nowrap;color:#000;transform:scaleX(0.8465);transform-origin:0 0;left:269.80px">From this location:</div>
<div style="position:absolute;top:232.60px;font-size:12px;line-height:15px;white-space:nowrap;color:#000;transform:scaleX(0.8469);transform-origin:0 0;left:272.20px">rebeladmlive.onmicrosoft.com</div>
<div style="position:absolute;top:234.70px;font-size:12px;line-height:15px;white-space:nowrap;color:#000;transform:scaleX(0.8717);transform-origin:0 0;left:645.65px">Locations...</div>
<div style="position:absolute;top:263.00px;font-size:12px;line-height:15px;white-space:nowrap;color:#000;transform:scaleX(0.8253);transform-origin:0 0;left:276.75px">Common Queries</div>
<div style="position:absolute;top:294.50px;font-size:12px;line-height:15px;white-space:nowrap;color:#000;transform:scaleX(0.8450);transform-origin:0 0;left:284.00px">Name:</div>
<div style="position:absolute;top:296.30px;font-size:12px;line-height:15px;white-space:nowrap;color:#000;transform:scaleX(0.8450);transform-origin:0 0;left:352.20px">Starts with</div>
<div style="position:absolute;top:325.00px;font-size:12px;line-height:15px;white-space:nowrap;color:#a0a0a0;transform:scaleX(0.8450);transform-origin:0 0;left:284.00px">Description:</div>
<div style="position:absolute;top:325.30px;font-size:12px;line-height:15px;white-space:nowrap;color:#a0a0a0;transform:scaleX(0.8450);transform-origin:0 0;left:352.20px">Starts with</div>
<div style="position:absolute;top:354.30px;font-size:12px;line-height:15px;white-space:nowrap;color:#6d6d6d;transform:scaleX(0.8627);transform-origin:0 0;left:300.20px">Disabled accounts</div>
<div style="position:absolute;top:373.80px;font-size:12px;line-height:15px;white-space:nowrap;color:#6d6d6d;transform:scaleX(0.8422);transform-origin:0 0;left:300.20px">Non expiring password</div>
<div style="position:absolute;top:403.20px;font-size:12px;line-height:15px;white-space:nowrap;color:#a0a0a0;transform:scaleX(0.8592);transform-origin:0 0;left:284.00px">Days since last logon:</div>
<div style="position:absolute;top:290.20px;font-size:12px;line-height:15px;white-space:nowrap;color:#000;transform:scaleX(0.8450);transform-origin:0 0;left:687.17px">Columns...</div>
<div style="position:absolute;top:320.50px;font-size:12px;line-height:15px;white-space:nowrap;color:#000;transform:scaleX(0.8450);transform-origin:0 0;left:689.98px">Find Now</div>
<div style="position:absolute;top:350.80px;font-size:12px;line-height:15px;white-space:nowrap;color:#a0a0a0;transform:scaleX(0.8450);transform-origin:0 0;left:700.97px">Stop</div>
<div style="position:absolute;top:470.30px;font-size:12px;line-height:15px;white-space:nowrap;color:#000;transform:scaleX(0.8450);transform-origin:0 0;left:624.57px">OK</div>
<div style="position:absolute;top:470.30px;font-size:12px;line-height:15px;white-space:nowrap;color:#000;transform:scaleX(0.8450);transform-origin:0 0;left:695.62px">Cancel</div>
<div style="position:absolute;top:479.00px;font-size:12px;line-height:15px;white-space:nowrap;color:#000;transform:scaleX(0.8450);transform-origin:0 0;left:269.60px">Search results:</div>
<div style="position:absolute;top:501.70px;font-size:12px;line-height:15px;white-space:nowrap;color:#000;transform:scaleX(0.8450);transform-origin:0 0;left:266.90px">Name</div>
<div style="position:absolute;top:502.00px;font-size:12px;line-height:15px;white-space:nowrap;color:#000;transform:scaleX(0.8389);transform-origin:0 0;left:364.20px">E-Mail Address</div>
<div style="position:absolute;top:501.90px;font-size:12px;line-height:15px;white-space:nowrap;color:#000;transform:scaleX(0.8479);transform-origin:0 0;left:461.70px">Description</div>
<div style="position:absolute;top:501.90px;font-size:12px;line-height:15px;white-space:nowrap;color:#000;transform:scaleX(0.8450);transform-origin:0 0;left:559.20px">In Folder</div>
<div style="position:absolute;top:522.70px;font-size:12px;line-height:15px;white-space:nowrap;color:#000;transform:scaleX(0.8450);transform-origin:0 0;left:282.00px">AAD DC Admi...</div>
<div style="position:absolute;top:522.70px;font-size:12px;line-height:15px;white-space:nowrap;color:#000;transform:scaleX(0.8509);transform-origin:0 0;left:559.20px">rebeladmlive.on...</div>
<div style="position:absolute;top:522.70px;font-size:12px;line-height:15px;white-space:nowrap;color:#000;transform:scaleX(0.8450);transform-origin:0 0;left:461.70px">Security group u...</div>
<div style="position:absolute;top:539.27px;font-size:12px;line-height:15px;white-space:nowrap;color:#000;transform:scaleX(0.8450);transform-origin:0 0;left:282.00px">AAD DC Servi...</div>
<div style="position:absolute;top:539.27px;font-size:12px;line-height:15px;white-space:nowrap;color:#000;transform:scaleX(0.8509);transform-origin:0 0;left:559.20px">rebeladmlive.on...</div>
<div style="position:absolute;top:539.27px;font-size:12px;line-height:15px;white-space:nowrap;color:#000;transform:scaleX(0.8450);transform-origin:0 0;left:461.70px">Security group u...</div>
<div style="position:absolute;top:555.84px;font-size:12px;line-height:15px;white-space:nowrap;color:#000;transform:scaleX(0.8450);transform-origin:0 0;left:282.00px">AADDS Servi...</div>
<div style="position:absolute;top:555.84px;font-size:12px;line-height:15px;white-space:nowrap;color:#000;transform:scaleX(0.8509);transform-origin:0 0;left:559.20px">rebeladmlive.on...</div>
<div style="position:absolute;top:555.84px;font-size:12px;line-height:15px;white-space:nowrap;color:#000;transform:scaleX(0.8450);transform-origin:0 0;left:461.70px">AADDS Service ...</div>
<div style="position:absolute;top:572.41px;font-size:12px;line-height:15px;white-space:nowrap;color:#000;transform:scaleX(0.8450);transform-origin:0 0;left:282.00px">AADsync</div>
<div style="position:absolute;top:572.41px;font-size:12px;line-height:15px;white-space:nowrap;color:#000;transform:scaleX(0.8509);transform-origin:0 0;left:559.20px">rebeladmlive.on...</div>
<div style="position:absolute;top:588.98px;font-size:12px;line-height:15px;white-space:nowrap;color:#000;transform:scaleX(0.8450);transform-origin:0 0;left:282.00px">Adeline Dietel</div>
<div style="position:absolute;top:588.98px;font-size:12px;line-height:15px;white-space:nowrap;color:#000;transform:scaleX(0.8509);transform-origin:0 0;left:559.20px">rebeladmlive.on...</div>
<div style="position:absolute;top:605.55px;font-size:12px;line-height:15px;white-space:nowrap;color:#000;transform:scaleX(0.8450);transform-origin:0 0;left:282.00px">ADSyncAdmins</div>
<div style="position:absolute;top:605.55px;font-size:12px;line-height:15px;white-space:nowrap;color:#000;transform:scaleX(0.8509);transform-origin:0 0;left:559.20px">rebeladmlive.on...</div>
<div style="position:absolute;top:622.12px;font-size:12px;line-height:15px;white-space:nowrap;color:#000;transform:scaleX(0.8450);transform-origin:0 0;left:282.00px">ADSyncBrowse</div>
<div style="position:absolute;top:622.12px;font-size:12px;line-height:15px;white-space:nowrap;color:#000;transform:scaleX(0.8509);transform-origin:0 0;left:559.20px">rebeladmlive.on...</div>
<div style="position:absolute;top:638.69px;font-size:12px;line-height:15px;white-space:nowrap;color:#000;transform:scaleX(0.8450);transform-origin:0 0;left:282.00px">ADSyncOper...</div>
<div style="position:absolute;top:638.69px;font-size:12px;line-height:15px;white-space:nowrap;color:#000;transform:scaleX(0.8509);transform-origin:0 0;left:559.20px">rebeladmlive.on...</div>
<div style="position:absolute;top:655.26px;font-size:12px;line-height:15px;white-space:nowrap;color:#000;transform:scaleX(0.8450);transform-origin:0 0;left:282.00px">ADSyncPass...</div>
<div style="position:absolute;top:655.26px;font-size:12px;line-height:15px;white-space:nowrap;color:#000;transform:scaleX(0.8509);transform-origin:0 0;left:559.20px">rebeladmlive.on...</div>
<div style="position:absolute;top:671.83px;font-size:12px;line-height:15px;white-space:nowrap;color:#000;transform:scaleX(0.8450);transform-origin:0 0;left:282.00px">Alhard Spielm...</div>
<div style="position:absolute;top:671.83px;font-size:12px;line-height:15px;white-space:nowrap;color:#000;transform:scaleX(0.8509);transform-origin:0 0;left:559.20px">rebeladmlive.on...</div>
</div>
</body></html>
